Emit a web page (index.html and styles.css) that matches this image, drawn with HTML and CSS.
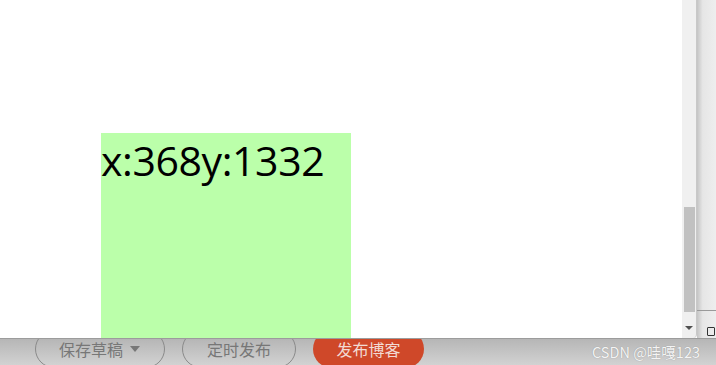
FILE: index.html
```html
<!DOCTYPE html>
<html lang="zh-CN">
<head>
    <meta charset="UTF-8">
    <meta name="viewport" content="width=device-width, initial-scale=1.0">
    <title>坐标</title>
    <link rel="stylesheet" href="styles.css">
</head>
<body>
    <div class="window">
        <div class="main">
            <div class="content">
                <div class="box">x:368y:1332</div>
            </div>
            <div class="scrollbar">
                <div class="track">
                    <div class="thumb"></div>
                </div>
                <div class="arrow"></div>
            </div>
            <div class="side">
                <div class="side-line"></div>
                <div class="side-icon"></div>
            </div>
        </div>
        <div class="toolbar">
            <button class="btn">保存草稿 <span class="caret"></span></button>
            <button class="btn">定时发布</button>
            <button class="btn primary">发布博客</button>
            <span class="mark">CSDN @哇嘎123</span>
        </div>
    </div>
</body>
</html>
```

FILE: styles.css
```css
* {
    padding: 0;
    margin: 0;
    box-sizing: border-box;
}
body {
    width: 716px;
    height: 365px;
    overflow: hidden;
    background-color: #fff;
    font-family: "Noto Sans CJK SC", "Open Sans", sans-serif;
}
.window {
    display: flex;
    flex-direction: column;
    height: 365px;
}
.main {
    display: flex;
    height: 338px;
}
.content {
    width: 682px;
    background-color: #fff;
    padding: 133px 0 0 101px;
    overflow: hidden;
}
.box {
    width: 250px;
    height: 230px;
    background-color: #bbffaa;
    font-family: "Open Sans", sans-serif;
    font-size: 41px;
    line-height: 54px;
    color: #000;
    letter-spacing: -0.4px;
}
.scrollbar {
    width: 15px;
    background-color: #f0f0f0;
    display: flex;
    flex-direction: column;
    border-bottom-right-radius: 4px;
    border-right: 1px solid #c8c8c8;
}
.track {
    flex: 1;
    padding: 207px 1px 0 2px;
}
.thumb {
    height: 105px;
    background-color: #c1c1c1;
}
.arrow {
    height: 20px;
    display: flex;
    justify-content: center;
    align-items: center;
}
.arrow::before {
    content: "";
    border-left: 4px solid transparent;
    border-right: 4px solid transparent;
    border-top: 4px solid #505050;
}
.side {
    flex: 1;
    background: linear-gradient(to right, #c4c4c4, #e6e6e6 30%, #eeeeee);
    padding-top: 310px;
}
.side-line {
    height: 1px;
    background-color: #9a9a9a;
}
.side-icon {
    width: 8px;
    height: 9px;
    margin: 16px 0 0 10px;
    border: 1px solid #333;
    border-radius: 1px;
}
.toolbar {
    flex: 1;
    display: flex;
    align-items: flex-start;
    padding-left: 35px;
    gap: 17px;
    border-top: 1px solid #9c9c9c;
    background: linear-gradient(to bottom, #b6b6b6, #d2d2d2);
    overflow: hidden;
}
.btn {
    height: 38px;
    margin-top: -9px;
    border: 1px solid #8a8a8a;
    border-radius: 19px;
    background: transparent;
    font-family: "Noto Sans CJK SC", sans-serif;
    font-size: 16px;
    color: #777;
    padding: 0 0 0 23px;
    display: flex;
    align-items: center;
    gap: 7px;
}
.btn:first-child {
    width: 130px;
}
.btn:nth-child(2) {
    width: 114px;
    padding-left: 24px;
}
.caret {
    border-left: 5px solid transparent;
    border-right: 5px solid transparent;
    border-top: 6px solid #777;
}
.primary {
    width: 111px;
    padding: 0;
    border: none;
    background-color: #cf4829;
    color: #f2dad3;
    justify-content: center;
}
.mark {
    margin-left: auto;
    margin-right: 16px;
    margin-top: 2px;
    font-size: 14.5px;
    color: #f4f4f4;
    text-shadow: 0 0 1px #8a8a8a;
}
```
